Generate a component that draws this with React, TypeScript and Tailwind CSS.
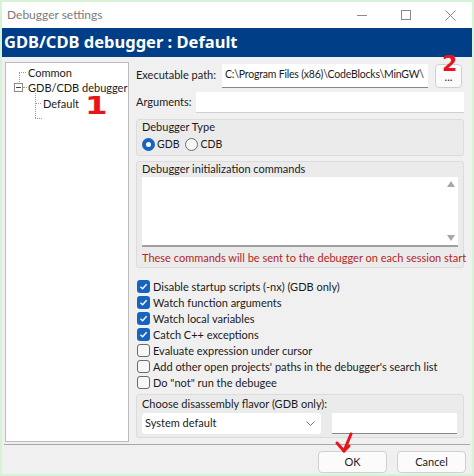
import React from "react";

const font = { fontFamily: 'Lato, "Noto Sans", sans-serif' };

function Check({ checked, label }: { checked: boolean; label: string }) {
  return (
    <div className="flex items-center h-[16px] whitespace-nowrap">
      {checked ? (
        <div className="w-[13px] h-[13px] rounded-[3px] bg-[#1565c0] flex items-center justify-center">
          <svg width="9" height="9" viewBox="0 0 9 9">
            <path d="M1.5 4.8 L3.6 6.8 L7.6 2.2" stroke="white" strokeWidth="1.4" fill="none" />
          </svg>
        </div>
      ) : (
        <div className="w-[13px] h-[13px] rounded-[3px] border border-[#6b6b6b] bg-[#f7f7f7]" />
      )}
      <span className="ml-[3px] text-[11px] text-[#1b1b1b] leading-none">{label}</span>
    </div>
  );
}

export default function App() {
  return (
    <div
      className="w-[474px] h-[476px] flex flex-col border-2 border-[#d6f3d6] bg-[#f0f0f0] overflow-hidden"
      style={font}
    >
      {/* title bar */}
      <div className="h-[26px] bg-white flex items-center">
        <span className="ml-[5px] text-[12px] text-[#7a7a7a]">Debugger settings</span>
        <div className="ml-auto flex items-center h-full">
          <div className="w-[44px] flex justify-center">
            <div className="w-[10px] h-[1px] bg-[#8a8a8a]" />
          </div>
          <div className="w-[44px] flex justify-center">
            <div className="w-[10px] h-[10px] border border-[#8a8a8a]" />
          </div>
          <div className="w-[44px] flex justify-center">
            <svg width="11" height="11" viewBox="0 0 11 11">
              <path d="M0.5 0.5 L10.5 10.5 M10.5 0.5 L0.5 10.5" stroke="#8a8a8a" strokeWidth="1" />
            </svg>
          </div>
        </div>
      </div>
      {/* header */}
      <div className="h-[29px] bg-[#003f87] flex items-center">
        <span
          className="ml-[2px] text-[16.5px] font-bold text-white whitespace-nowrap"
          style={{ fontFamily: '"Noto Sans", sans-serif' }}
        >
          GDB/CDB debugger : Default
        </span>
      </div>
      {/* body */}
      <div className="flex-1 flex flex-col">
        <div className="flex pt-[5px] pl-[3px] h-[386px]">
          {/* tree */}
          <div className="relative w-[124px] h-[380px] bg-white border border-[#bcbcbc]">
            <div className="relative h-full text-[11px] text-[#1b1b1b] whitespace-nowrap">
              <div className="absolute left-[13px] top-[9px] w-[1px] h-[12px] border-l border-dotted border-[#9a9a9a]" />
              <div className="absolute left-[13px] top-[9px] w-[7px] border-t border-dotted border-[#9a9a9a]" />
              <div className="absolute left-[8px] top-[20px] w-[9px] h-[9px] border border-[#8a8a8a] bg-white flex items-center justify-center">
                <div className="w-[5px] h-[1px] bg-[#444]" />
              </div>
              <div className="absolute left-[17px] top-[24px] w-[4px] border-t border-dotted border-[#9a9a9a]" />
              <div className="absolute left-[29px] top-[30px] w-[1px] h-[25px] border-l border-dotted border-[#9a9a9a]" />
              <div className="absolute left-[29px] top-[40px] w-[6px] border-t border-dotted border-[#9a9a9a]" />
              <div className="absolute left-[29px] top-[55px] w-[7px] border-t border-dotted border-[#9a9a9a]" />
              <span className="absolute left-[22px] top-[2px]">Common</span>
              <span className="absolute left-[22px] top-[17px]">GDB/CDB debugger</span>
              <span className="absolute left-[37px] top-[33px]">Default</span>
              <span
                className="absolute left-[82px] top-[31px] text-[24px] font-bold text-[#e8141b] leading-none"
                style={{ fontFamily: '"DejaVu Sans", sans-serif', transform: "scaleX(1.35)" }}
              >
                1
              </span>
            </div>
          </div>
          {/* right column */}
          <div className="ml-[7px] w-[328px] flex flex-col text-[11px] text-[#1b1b1b] whitespace-nowrap">
            <div className="flex items-center h-[25px] mt-[1px]">
              <span className="w-[86px]">Executable path:</span>
              <div className="w-[206px] h-[24px] bg-white border-b border-[#888] flex items-center px-[3px] overflow-hidden text-[10.5px] tracking-[-0.2px]">
                C:\Program Files (x86)\CodeBlocks\MinGW\
              </div>
              <div className="relative ml-[7px] w-[27px] h-[24px] bg-[#fbfbfb] border border-[#cfcfcf] rounded-[4px] flex items-end justify-center pb-[5px] leading-none">
                ...
                <span
                  className="absolute left-[6px] top-[-12px] text-[22px] font-bold text-[#e8141b] leading-none"
                  style={{ fontFamily: '"DejaVu Sans", sans-serif' }}
                >
                  2
                </span>
              </div>
            </div>
            <div className="flex items-center h-[21px] mt-[4px]">
              <span className="w-[60px]">Arguments:</span>
              <div className="flex-1 h-[21px] bg-white border-b border-[#d0d0d0]" />
            </div>
            {/* debugger type */}
            <div className="mt-[6px] h-[37px] border border-[#dcdcdc] rounded-[3px] bg-[#ebebeb] px-[5px]">
              <div className="mt-[-1px] leading-[16px]">Debugger Type</div>
              <div className="flex items-center mt-[2px]">
                <div className="w-[13px] h-[13px] rounded-full bg-[#1565c0] flex items-center justify-center">
                  <div className="w-[5px] h-[5px] rounded-full bg-white" />
                </div>
                <span className="ml-[2px] text-[10.5px]">GDB</span>
                <div className="ml-[6px] w-[13px] h-[13px] rounded-full border border-[#6b6b6b] bg-[#f7f7f7]" />
                <span className="ml-[2px] text-[10.5px]">CDB</span>
              </div>
            </div>
            {/* init commands */}
            <div className="mt-[5px] h-[107px] border border-[#dcdcdc] rounded-[3px] bg-[#ebebeb] px-[5px]">
              <div className="mt-[-1px] leading-[16px]">Debugger initialization commands</div>
              <div className="h-[70px] bg-white border-b-2 border-[#a0a0a0] flex justify-end">
                <div className="w-[14px] flex flex-col items-center justify-between py-[4px]">
                  <svg width="8" height="6" viewBox="0 0 8 6"><path d="M0 6 L4 0 L8 6 Z" fill="#a8a8a8" /></svg>
                  <svg width="8" height="6" viewBox="0 0 8 6"><path d="M0 0 L4 6 L8 0 Z" fill="#a8a8a8" /></svg>
                </div>
              </div>
              <div className="mt-[3px] text-[#b3261e]">
                These commands will be sent to the debugger on each session start
              </div>
            </div>
            {/* checkboxes */}
            <div className="mt-[10px] ml-[1px] flex flex-col">
              <Check checked label="Disable startup scripts (-nx) (GDB only)" />
              <Check checked label="Watch function arguments" />
              <Check checked label="Watch local variables" />
              <Check checked label="Catch C++ exceptions" />
              <Check checked={false} label="Evaluate expression under cursor" />
              <Check checked={false} label="Add other open projects' paths in the debugger's search list" />
              <Check checked={false} label={'Do "not" run the debugee'} />
            </div>
            {/* disassembly */}
            <div className="mt-[4px] h-[44px] border border-[#dcdcdc] rounded-[3px] bg-[#ebebeb] px-[5px]">
              <div className="mt-[1px] leading-[16px]">Choose disassembly flavor (GDB only):</div>
              <div className="flex items-center mt-[1px]">
                <div className="w-[179px] h-[21px] bg-white rounded-[3px] flex items-center px-[3px]">
                  <span>System default</span>
                  <svg className="ml-auto mr-[3px]" width="9" height="6" viewBox="0 0 9 6">
                    <path d="M0.5 0.5 L4.5 4.5 L8.5 0.5" stroke="#777" strokeWidth="1" fill="none" />
                  </svg>
                </div>
                <div className="ml-[11px] w-[125px] h-[21px] bg-white border-b border-[#888]" />
              </div>
            </div>
          </div>
        </div>
        {/* separator */}
        <div className="mt-[1px] mx-[2px] h-[1px] bg-[#a8a8a8]" />
        {/* buttons */}
        <div className="relative flex justify-end pr-[6px] mt-[6px] text-[11px] text-[#1b1b1b]">
          <div className="w-[69px] h-[22px] bg-[#fbfbfb] border border-[#d0d0d0] rounded-[4px] flex items-center justify-center">
            OK
          </div>
          <div className="ml-[10px] w-[69px] h-[22px] bg-[#fbfbfb] border border-[#d0d0d0] rounded-[4px] flex items-center justify-center">
            Cancel
          </div>
          <svg className="absolute left-[330px] top-[-20px]" width="24" height="24" viewBox="0 0 24 24">
            <path d="M19 3 L12 20" stroke="#e8141b" strokeWidth="3" strokeLinecap="round" fill="none" />
            <path d="M5 12 L12 20 L17 15" stroke="#e8141b" strokeWidth="3" strokeLinecap="round" strokeLinejoin="round" fill="none" />
          </svg>
        </div>
      </div>
    </div>
  );
}
